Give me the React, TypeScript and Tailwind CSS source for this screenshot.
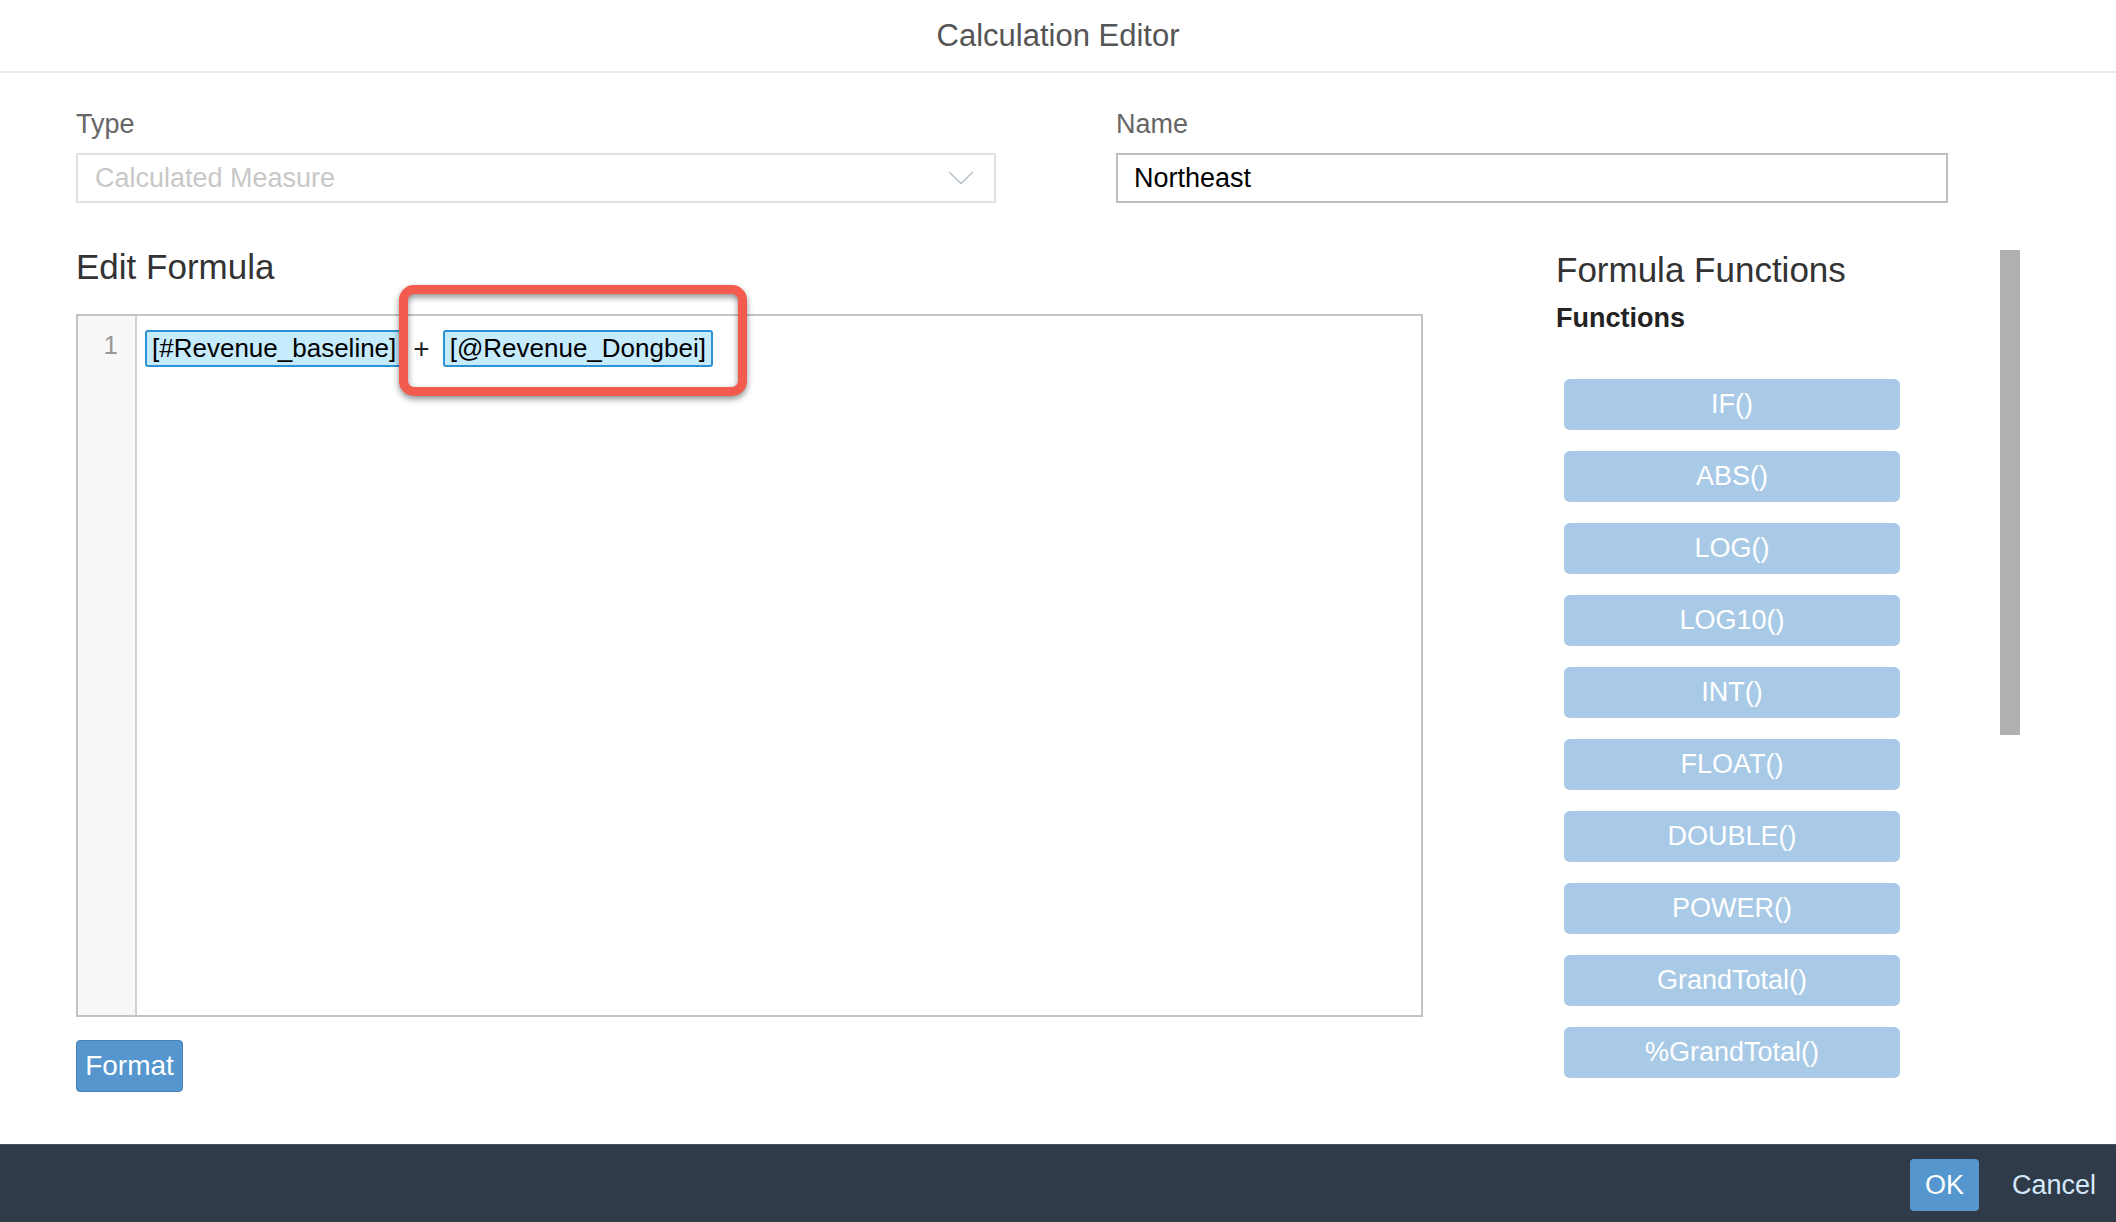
import React from "react";

const functions = [
  "IF()",
  "ABS()",
  "LOG()",
  "LOG10()",
  "INT()",
  "FLOAT()",
  "DOUBLE()",
  "POWER()",
  "GrandTotal()",
  "%GrandTotal()",
];

export default function App() {
  return (
    <div className="w-[2116px] h-[1222px] flex flex-col bg-white overflow-hidden font-['Liberation_Sans',Arial,sans-serif]">
      {/* Header */}
      <header className="h-[73px] shrink-0 border-b-2 border-[#ebebeb] flex items-center justify-center">
        <span className="text-[31px] leading-[36px] text-[#555555]">Calculation Editor</span>
      </header>

      {/* Body */}
      <main className="flex-1 px-[76px] pt-[35px]">
        {/* Fields */}
        <div className="flex">
          <div className="w-[920px] flex flex-col">
            <label className="text-[27px] leading-[32px] text-[#666666] mb-[13px]">Type</label>
            <div className="h-[50px] border-2 border-[#e1e1e1] flex items-center justify-between pl-[17px] pr-[20px]">
              <span className="text-[27px] text-[#c8c8c8]">Calculated Measure</span>
              <svg width="26" height="14" viewBox="0 0 26 14" fill="none">
                <polyline points="1,1 13,12.5 25,1" stroke="#b9c3cb" strokeWidth="1.6" />
              </svg>
            </div>
          </div>
          <div className="w-[832px] ml-[120px] flex flex-col">
            <label className="text-[27px] leading-[32px] text-[#666666] mb-[13px]">Name</label>
            <div className="h-[50px] border-2 border-[#bfbfbf] flex items-center px-[16px]">
              <span className="text-[27px] text-black">Northeast</span>
            </div>
          </div>
        </div>

        {/* Lower section */}
        <div className="flex items-start">
          {/* Left column */}
          <div className="w-[1347px] pt-[43px] flex flex-col">
            <h2 className="text-[35px] leading-[42px] text-[#333333]">Edit Formula</h2>
            <div className="relative mt-[26px] h-[703px] border-2 border-[#c4c4c4] flex">
              <div className="w-[59px] shrink-0 bg-[#f8f8f8] border-r-2 border-[#d2d2d2] pt-[13px] pr-[17px] text-right">
                <span className="text-[26px] leading-[32px] text-[#999999]">1</span>
              </div>
              <div className="flex items-start pt-[14px] pl-[8px]">
                <span className="h-[37px] border-2 border-[#2b93d3] bg-[#c5ebfc] rounded-[3px] px-[5px] text-[26px] leading-[32px] text-black">
                  [#Revenue_baseline]
                </span>
                <span className="ml-[10px] mr-[13px] text-[28px] leading-[37px] text-[#222222]">+</span>
                <span className="h-[37px] border-2 border-[#2b93d3] bg-[#c5ebfc] rounded-[3px] px-[5px] text-[26px] leading-[32px] text-black">
                  [@Revenue_Dongbei]
                </span>
              </div>
              <div className="absolute left-[321px] top-[-31px] w-[348px] h-[111px] border-[9px] border-[#f45b4f] rounded-[15px] drop-shadow-[0_3px_3px_rgba(0,0,0,0.45)] pointer-events-none" />
            </div>
            <div className="mt-[23px]">
              <button className="h-[52px] w-[107px] bg-[#5496cd] border border-[#4783b8] rounded-[4px] text-white text-[28px] leading-[50px]">
                Format
              </button>
            </div>
          </div>

          {/* Right column */}
          <div className="ml-[133px] pt-[46px] flex items-start">
            <div className="w-[444px] flex flex-col">
              <h2 className="text-[35px] leading-[42px] text-[#333333]">Formula Functions</h2>
              <h3 className="mt-[11px] text-[27px] leading-[32px] font-bold text-[#222222]">Functions</h3>
              <div className="ml-[8px] mt-[45px] flex flex-col gap-[21px]">
                {functions.map((f) => (
                  <button
                    key={f}
                    className="h-[51px] w-[336px] rounded-[6px] bg-[#a9cae6] text-white text-[27px] leading-[51px] text-center"
                  >
                    {f}
                  </button>
                ))}
              </div>
            </div>
            <div className="mt-[1px] w-[20px] h-[485px] bg-[#b0b0b0]" />
          </div>
        </div>
      </main>

      {/* Footer */}
      <footer className="h-[78px] shrink-0 bg-[#2f3b48] border-t border-[#45515e] flex justify-end items-start pt-[14px]">
        <button className="h-[52px] w-[69px] bg-[#5496cd] rounded-[4px] text-white text-[27px] leading-[52px]">OK</button>
        <button className="ml-[33px] mr-[20px] h-[52px] text-[27px] leading-[52px] text-[#d6e9fa]">Cancel</button>
      </footer>
    </div>
  );
}
